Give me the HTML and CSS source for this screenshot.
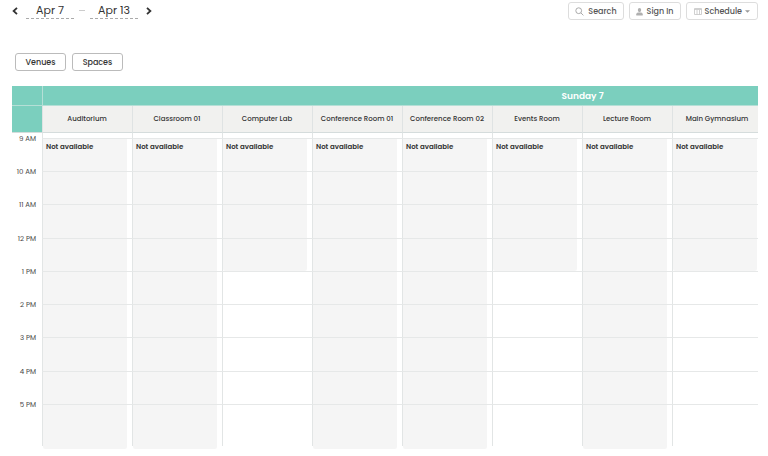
FILE: index.html
```html
<!DOCTYPE html>
<html lang="en">
<head>
    <meta charset="UTF-8">
    <meta name="viewport" content="width=device-width, initial-scale=1.0">
    <title>Schedule</title>
    <link rel="stylesheet" href="styles.css">
</head>
<body>
    <header class="topbar">
        <div class="range">
            <button type="button" class="arrow" aria-label="Previous week">
                <svg width="6" height="8" viewBox="0 0 6 8"><path d="M5 .8 1.6 4 5 7.2"/></svg>
            </button>
            <a class="date" href="#">Apr 7</a>
            <span class="dash"></span>
            <a class="date" href="#">Apr 13</a>
            <button type="button" class="arrow" aria-label="Next week">
                <svg width="6" height="8" viewBox="0 0 6 8"><path d="M1 .8 4.4 4 1 7.2"/></svg>
            </button>
        </div>
        <nav class="actions">
            <button type="button" class="action">
                <svg width="9" height="9" viewBox="0 0 9 9" fill="none" stroke="#aaa"><circle cx="3.7" cy="3.7" r="2.9"/><path d="M5.9 5.9 8.4 8.4"/></svg>
                <span>Search</span>
            </button>
            <button type="button" class="action">
                <svg width="7" height="8" viewBox="0 0 7 8" fill="#b0b0b0"><ellipse cx="3.5" cy="2.1" rx="1.7" ry="2.1"/><path d="M.3 7.6V6.2Q.3 4.8 2 4.5h3q1.7.3 1.7 1.7v1.4z"/></svg>
                <span>Sign In</span>
            </button>
            <button type="button" class="action schedule">
                <svg width="8" height="7" viewBox="0 0 8 7" fill="none" stroke="#c4c4c4"><path d="M.5.5h7v6h-7zM.5 1.5h7M3 2v4.500M5.500 2v4.500" stroke-width=".8"/></svg>
                <span>Schedule</span>
                <svg width="5" height="3" viewBox="0 0 6 3" fill="#999"><path d="M0 0h6L3 3z"/></svg>
            </button>
        </nav>
    </header>

    <div class="filters">
        <button type="button" class="filter">Venues</button>
        <button type="button" class="filter">Spaces</button>
    </div>

    <main class="calendar">
        <table class="grid">
            <colgroup>
                <col class="col-time">
                <col class="col-room" span="12">
            </colgroup>
            <thead>
                <tr class="days">
                    <td></td>
                    <th colspan="12" scope="colgroup">Sunday 7</th>
                </tr>
                <tr class="rooms" id="rooms">
                    <td></td>
                </tr>
            </thead>
            <tbody id="hours"></tbody>
        </table>
    </main>

    <script>
        // closed: 'all' for the whole day, 'morning' until 1 PM
        const rooms = [
            { name: 'Auditorium', closed: 'all' },
            { name: 'Classroom 01', closed: 'all' },
            { name: 'Computer Lab', closed: 'morning' },
            { name: 'Conference Room 01', closed: 'all' },
            { name: 'Conference Room 02', closed: 'all' },
            { name: 'Events Room', closed: 'morning' },
            { name: 'Lecture Room', closed: 'all' },
            { name: 'Main Gymnasium', closed: 'morning' }
        ];
        const hours = ['9 AM', '10 AM', '11 AM', '12 PM', '1 PM', '2 PM', '3 PM', '4 PM', '5 PM'];

        document.getElementById('rooms').innerHTML += rooms.map(room => `<th scope="col">${room.name}</th>`).join('');

        let rows = '<tr class="gap"><td></td>' + rooms.map(() => '<td class="slot"></td>').join('') + '</tr>';
        hours.forEach((hour, i) => {
            rows += `<tr class="hour"><th scope="row"><span class="time">${hour}</span></th>`;
            rooms.forEach(room => {
                const block = i === 0 ? `<div class="block ${room.closed}">Not available</div>` : '';
                rows += `<td class="slot">${block}</td>`;
            });
            rows += '</tr>';
        });
        document.getElementById('hours').innerHTML = rows;
    </script>
</body>
</html>
```
FILE: styles.css
```css
* {
    box-sizing: border-box;
}
body {
    margin: 0;
    padding: 2px 10px 0 12px;
    background: #fff;
    color: #333;
    font-family: Poppins, Inter, sans-serif;
    font-size: 8px;
}
button {
    margin: 0;
    font-family: inherit;
    background: #fff;
    cursor: pointer;
}

/* Top bar */
.topbar {
    display: flex;
    justify-content: space-between;
    align-items: flex-start;
}
.range {
    display: flex;
    align-items: center;
}
.arrow {
    display: flex;
    padding: 0;
    border: none;
}
.arrow path {
    fill: none;
    stroke: #333;
    stroke-width: 1.8;
}
.date {
    width: 48px;
    margin: 0 8px;
    padding-top: 1px;
    border-bottom: 1px dashed #aaa;
    color: #333;
    font-size: 11px;
    line-height: 15px;
    text-align: center;
    text-decoration: none;
}
.dash {
    width: 6px;
    margin: 0 -3px;
    border-top: 1px solid #ccc;
}
.actions {
    display: flex;
    gap: 5px;
}
.action {
    display: flex;
    align-items: center;
    justify-content: center;
    gap: 4px;
    height: 18px;
    padding: 1px 6px 0;
    border: 1px solid #ddd;
    border-radius: 3px;
    color: #555;
    font-size: 8px;
    font-weight: 500;
}
.schedule {
    gap: 3px;
    padding: 1px 7px 0;
}

/* Filters */
.filters {
    display: flex;
    gap: 6px;
    margin: 33px 3px 15px;
}
.filter {
    width: 51px;
    height: 18px;
    padding: 2px 0 0;
    border: 1px solid #bbb;
    border-radius: 3px;
    color: #333;
    font-size: 8px;
    font-weight: 500;
}

/* Calendar */
.calendar {
    overflow: hidden;
    padding-bottom: 7px;
}
.grid {
    width: 1110px;
    table-layout: fixed;
    border-spacing: 0;
}
.grid th,
.grid td {
    padding: 0;
}
.col-time {
    width: 30px;
}
.col-room {
    width: 90px;
}
.grid .days > * {
    height: 20px;
    padding-top: 1px;
    background: #7bcfbe;
    border-bottom: 1px solid #b5dfd6;
    color: #fff;
    font-size: 9px;
    font-weight: 600;
}
.days th {
    border-left: 1px solid #b5dfd6;
}
.grid .rooms > * {
    height: 27px;
    background: #f1f1ef;
    border-bottom: 1px solid #d5dcdc;
    font-size: 7px;
    font-weight: 500;
}
.grid .rooms th {
    padding-right: 1px;
    border-left: 1px solid #dfe3e3;
}
.grid .rooms td {
    background: #7bcfbe;
}
.gap > * {
    height: 5px;
}
.hour > * {
    height: 33px;
    vertical-align: top;
}
/* one extra pixel every four hours */
.hour:nth-child(4n) > * {
    height: 34px;
}
.hour:last-child > * {
    height: 42px;
}
.slot {
    position: relative;
    border-left: 1px solid #e2e5e5;
}
.hour .slot {
    border-top: 1px solid #e6e8e8;
}
.time {
    display: block;
    margin-top: -4px;
    padding-right: 6px;
    color: #444;
    font-size: 7px;
    font-weight: 400;
    line-height: 10px;
    text-align: right;
}
.block {
    position: absolute;
    top: 0;
    left: 0;
    width: 84px;
    padding: 3px;
    border-radius: 0 0 2px 2px;
    background: rgba(241, 241, 241, .75);
    font-size: 7px;
    font-weight: 600;
    line-height: 10px;
}
.all {
    height: 310px;
}
.morning {
    height: 132px;
}
```
